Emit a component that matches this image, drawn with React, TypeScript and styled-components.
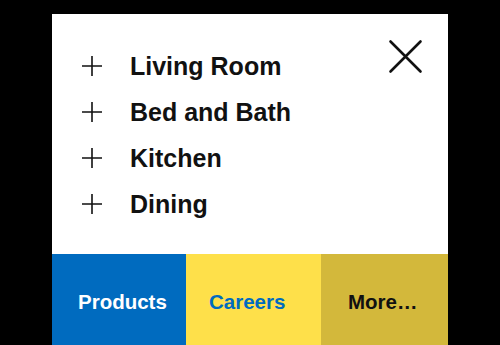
import React from "react";
import styled, { createGlobalStyle } from "styled-components";

const Global = createGlobalStyle`
  html, body { margin: 0; padding: 0; background: #000; }
  body { font-family: "Liberation Sans", Arial, Helvetica, sans-serif; }
`;

const Stage = styled.div`
  width: 500px;
  height: 345px;
  overflow: hidden;
  background: #000;
  display: flex;
  justify-content: center;
  padding-top: 14px;
  box-sizing: border-box;
`;

const Panel = styled.nav`
  position: relative;
  width: 396px;
  background: #fff;
  display: flex;
  flex-direction: column;
  align-self: flex-start;
`;

const List = styled.ul`
  list-style: none;
  margin: 0;
  padding: 29px 0 27px 30px;
  display: flex;
  flex-direction: column;
`;

const Item = styled.li`
  display: flex;
  align-items: center;
  gap: 28px;
  height: 46px;
  font-size: 25px;
  font-weight: 700;
  color: #111;
  line-height: 46px;
`;

const PlusIcon = styled.svg`
  width: 20px;
  height: 20px;
  flex: none;
  margin-top: -1px;
`;

const CloseButton = styled.button`
  position: absolute;
  top: 25px;
  right: 25px;
  width: 35px;
  height: 35px;
  padding: 0;
  border: 0;
  background: transparent;
  display: flex;
  align-items: center;
  justify-content: center;
`;

const Tabs = styled.div`
  display: grid;
  grid-template-columns: 134px 135px 1fr;
  height: 91px;
`;

const Tab = styled.a<{ $bg: string; $fg: string; $pad: number }>`
  display: flex;
  align-items: center;
  padding-left: ${(p) => p.$pad}px;
  padding-top: 4px;
  background: ${(p) => p.$bg};
  color: ${(p) => p.$fg};
  font-size: 20.5px;
  font-weight: 700;
  text-decoration: none;
`;

const Plus = () => (
  <PlusIcon viewBox="0 0 20 20">
    <path d="M10 0V20M0 10H20" stroke="#111" strokeWidth="1.6" fill="none" />
  </PlusIcon>
);

const items = ["Living Room", "Bed and Bath", "Kitchen", "Dining"];

export default function App() {
  return (
    <>
      <Global />
      <Stage>
        <Panel>
          <CloseButton aria-label="Close">
            <svg width="35" height="35" viewBox="0 0 35 35">
              <path
                d="M2.5 2.5L32.5 32.5M32.5 2.5L2.5 32.5"
                stroke="#111"
                strokeWidth="2.6"
                strokeLinecap="round"
                fill="none"
              />
            </svg>
          </CloseButton>
          <List>
            {items.map((t) => (
              <Item key={t}>
                <Plus />
                {t}
              </Item>
            ))}
          </List>
          <Tabs>
            <Tab href="#" $bg="#006bbf" $fg="#fff" $pad={26}>
              Products
            </Tab>
            <Tab href="#" $bg="#fee04a" $fg="#006bbf" $pad={23}>
              Careers
            </Tab>
            <Tab href="#" $bg="#d3b83b" $fg="#111" $pad={27}>
              More…
            </Tab>
          </Tabs>
        </Panel>
      </Stage>
    </>
  );
}
